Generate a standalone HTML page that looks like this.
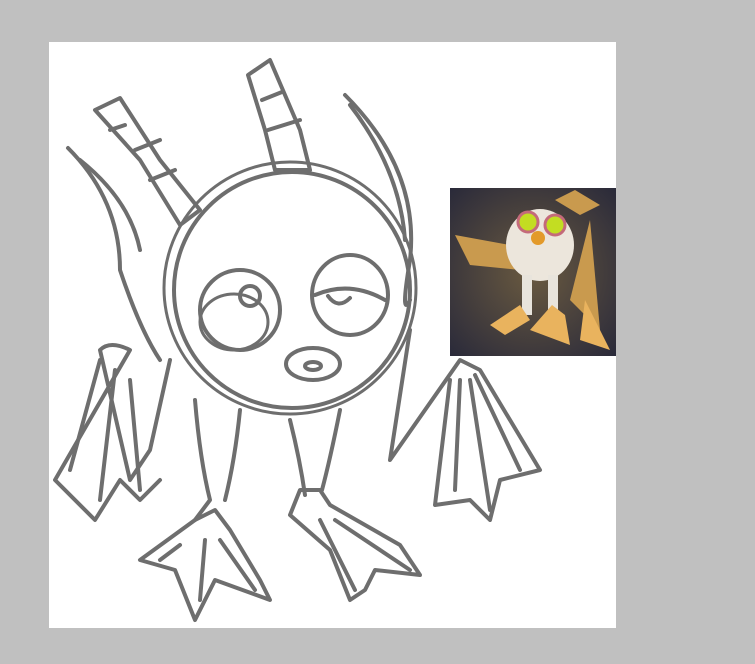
<!DOCTYPE html>
<html><head><style>
html,body{margin:0;padding:0;width:755px;height:664px;background:#c0c0c0;overflow:hidden}
</style></head><body>
<svg width="755" height="664" viewBox="0 0 755 664" xmlns="http://www.w3.org/2000/svg" style="position:absolute;left:0;top:0">
<rect x="49" y="42" width="567" height="586" fill="#fff"/>
<g fill="none" stroke="#6e6e6e" stroke-width="4" stroke-linecap="round" stroke-linejoin="round">
<!-- body circle -->
<circle cx="292" cy="290" r="118"/>
<circle cx="290" cy="288" r="126" stroke-width="3"/>
<!-- eyes -->
<ellipse cx="240" cy="310" rx="40" ry="40"/>
<circle cx="250" cy="296" r="10"/>
<ellipse cx="234" cy="322" rx="34" ry="28" stroke-width="3"/>
<ellipse cx="350" cy="295" rx="38" ry="40"/>
<path d="M315 295 Q350 280 385 300"/>
<path d="M328 296 Q338 310 350 298"/>
<!-- beak -->
<ellipse cx="313" cy="364" rx="27" ry="16"/>
<ellipse cx="313" cy="366" rx="8" ry="4"/>
<!-- horns -->
<path d="M95 110 L120 98 L160 160 L200 210 L180 225 L140 160 Z"/>
<path d="M110 130 L125 125 M135 150 L160 140 M150 180 L175 170"/>
<path d="M248 75 L270 60 L300 130 L310 170 L275 170 L265 130 Z"/>
<path d="M262 100 L282 92 M268 130 L300 120"/>
<path d="M68 148 Q120 200 120 270 Q140 330 160 360"/>
<path d="M80 160 Q130 200 140 250"/>
<path d="M345 95 Q420 170 410 260 Q400 320 410 300"/>
<path d="M350 105 Q400 170 405 240"/>
<!-- wings -->
<path d="M170 360 L150 450 L130 480 L100 350 Q110 340 130 350 L55 480 L95 520 L120 480 L140 500 L160 480"/>
<path d="M100 360 L70 470 M115 370 L100 500 M130 380 L140 490"/>
<path d="M410 330 L390 460 L460 360 L480 370 L540 470 L500 480 L490 520 L470 500 L435 505 L450 380"/>
<path d="M460 380 L455 490 M470 380 L490 510 M475 375 L520 470"/>
<!-- legs -->
<path d="M195 400 Q200 460 210 500 L195 520"/>
<path d="M240 410 Q235 460 225 500"/>
<path d="M290 420 Q300 460 305 495"/>
<path d="M340 410 Q330 460 322 490"/>
<!-- feet -->
<path d="M195 520 L140 560 L175 570 L195 620 L215 580 L270 600 L260 580 L230 530 L215 510 Z"/>
<path d="M180 545 L160 560 M205 540 L200 600 M220 540 L255 590"/>
<path d="M300 490 L290 515 L330 550 L350 600 L365 590 L375 570 L420 575 L400 545 L330 505 L320 490 Z"/>
<path d="M320 520 L355 590 M335 520 L410 570"/>
</g>
<!-- photo -->
<defs>
<radialGradient id="bg" cx="50%" cy="50%" r="70%"><stop offset="0" stop-color="#6a5a40"/><stop offset="1" stop-color="#2a2a3a"/></radialGradient>
</defs>
<rect x="450" y="188" width="166" height="168" fill="url(#bg)"/>
<path d="M455 235 L510 245 L520 270 L470 265 Z" fill="#c99a4e"/>
<path d="M590 220 L600 330 L570 300 Z" fill="#c99a4e"/>
<ellipse cx="540" cy="245" rx="34" ry="36" fill="#ece6dc"/>
<rect x="522" y="275" width="10" height="40" fill="#e8e4dc"/>
<rect x="548" y="275" width="10" height="40" fill="#e8e4dc"/>
<path d="M520 305 L490 325 L505 335 L530 320 Z" fill="#e9b35e"/>
<path d="M552 305 L530 330 L570 345 L565 315 Z" fill="#e9b35e"/>
<path d="M585 300 L580 340 L610 350 Z" fill="#e9b35e"/>
<circle cx="528" cy="222" r="10" fill="#c3dd22" stroke="#c46a7a" stroke-width="3"/>
<circle cx="555" cy="225" r="10" fill="#c3dd22" stroke="#c46a7a" stroke-width="3"/>
<circle cx="538" cy="238" r="7" fill="#e39a2a"/>
<path d="M555 200 L575 190 L600 205 L580 215 Z" fill="#c99a4e"/>
</svg>
</body></html>
